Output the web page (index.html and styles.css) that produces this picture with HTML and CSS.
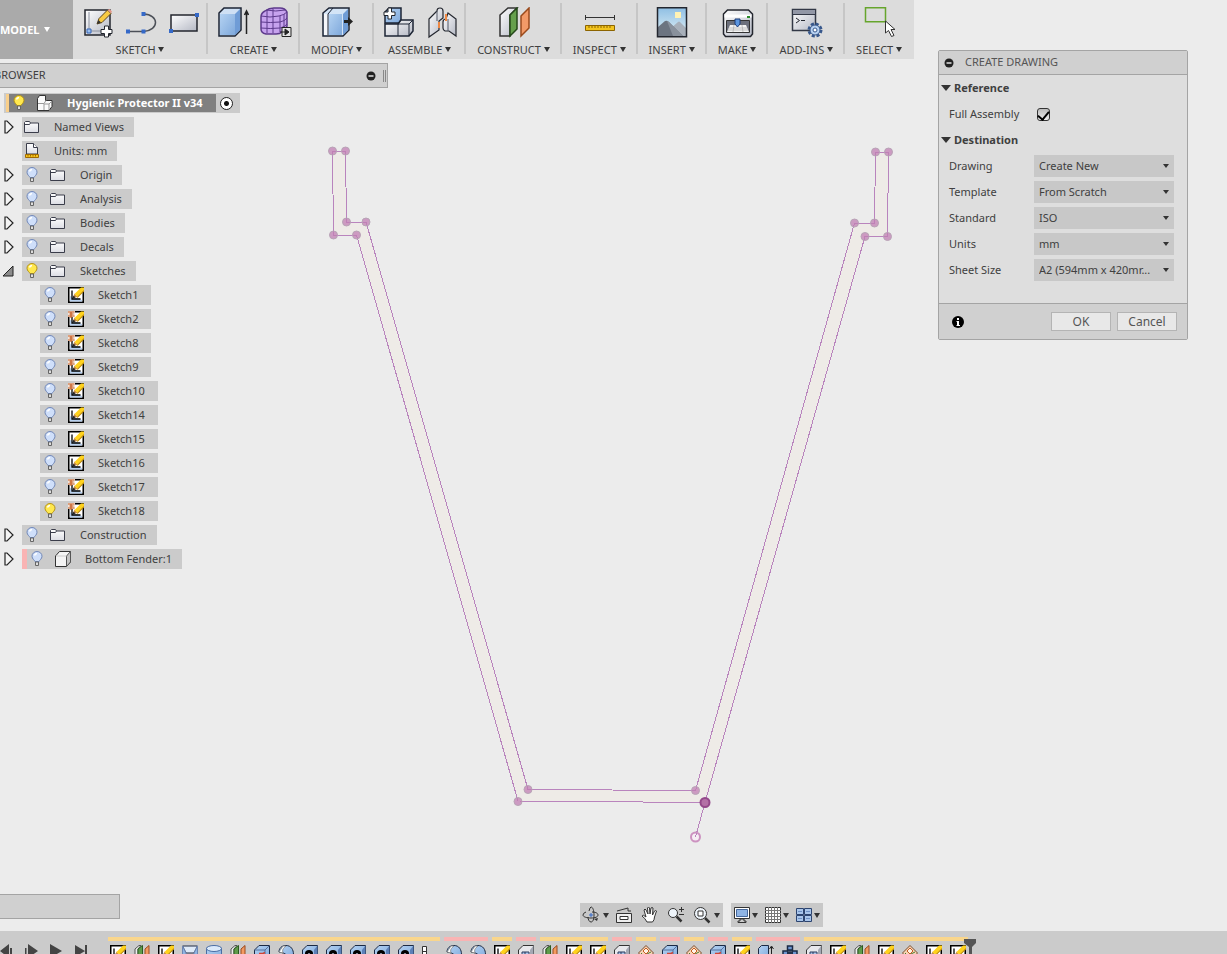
FILE: index.html
```html
<!DOCTYPE html>
<html lang="en">
<head>
    <meta charset="UTF-8">
    <meta name="viewport" content="width=device-width, initial-scale=1.0">
    <title>Hygienic Protector II v34</title>
    <link rel="stylesheet" href="styles.css">
</head>
<body>
    <!-- Shared icons -->
    <svg class="sprite" aria-hidden="true">
        <defs>
            <linearGradient id="blue" x1="0" y1="0" x2="1" y2="1">
                <stop offset="0" stop-color="#b4d2f2"/><stop offset="1" stop-color="#7fa9dc"/>
            </linearGradient>
            <linearGradient id="grey" x1="0" y1="0" x2="1" y2="1">
                <stop offset="0" stop-color="#ffffff"/><stop offset="1" stop-color="#b4b8c4"/>
            </linearGradient>
            <linearGradient id="paper" x1="0" y1="0" x2="0" y2="1">
                <stop offset="0" stop-color="#ffffff"/><stop offset="1" stop-color="#dcdde4"/>
            </linearGradient>
            <linearGradient id="sky" x1="0" y1="0" x2="0" y2="1">
                <stop offset="0" stop-color="#8fbfe4"/><stop offset="1" stop-color="#e4f2f6"/>
            </linearGradient>
        </defs>
        <symbol id="bulb-off" viewBox="0 0 16 16">
            <path d="M6 10.500C5.500 9 3 8 3 5.200a5 4.700 0 0 1 10 0C13 8 10.500 9 10 10.500z" fill="#cfdffa" stroke="#7188b8"/>
            <path d="M5.500 4.500q.5-1.700 2.500-2" fill="none" stroke="#fff" stroke-width="1.500"/>
            <path d="M6.500 11h3v3.500h-3z" fill="#ddd" stroke="#666"/>
        </symbol>
        <symbol id="bulb-on" viewBox="0 0 16 16">
            <path d="M6 10.500C5.500 9 3 8 3 5.200a5 4.700 0 0 1 10 0C13 8 10.500 9 10 10.500z" fill="#ffe84e" stroke="#b49216"/>
            <path d="M5.500 4.500q.5-1.700 2.500-2" fill="none" stroke="#fff" stroke-width="1.500"/>
            <path d="M6.500 11h3v3.500h-3z" fill="#ddd" stroke="#666"/>
        </symbol>
        <symbol id="folder" viewBox="0 0 16 16">
            <path d="M.5 13.500v-10l1-1h4l1 1.500h8v9.500z" fill="url(#paper)" stroke="#3a3d4a"/>
            <path d="M.5 5.500h5l1-1.500" fill="none" stroke="#3a3d4a"/>
        </symbol>
        <symbol id="units" viewBox="0 0 16 16">
            <path d="M2.500 11V.5h7l4 4V11z" fill="url(#paper)" stroke="#3a3d4a"/>
            <path d="M9.500.5v4h4" fill="#fff" stroke="#3a3d4a"/>
            <path d="M1.500 11.500h13v3h-13z" fill="#f6c51c" stroke="#a06a00"/>
            <path d="M4 12v1.500M6.500 12v1.500M9 12v1.500M11.500 12v1.500" stroke="#a06a00"/>
        </symbol>
        <symbol id="cube" viewBox="0 0 16 16">
            <path d="M.5 5l4-4.500h11V11l-4 4.500H.5z" fill="#f4f4f4" stroke="#333"/>
            <path d="M11.500 5l4-4.500V11l-4 4.500z" fill="#c4c4c4" stroke="#555"/>
            <path d="M1 5h10.500" fill="none" stroke="#ccc"/>
        </symbol>
        <symbol id="assembly" viewBox="0 0 16 16">
            <path d="M.5 3.500l2-3h6v5h6.500v6l-3 4H.5z" fill="#fafafa" stroke="#333"/>
            <path d="M1 8.500h6M7 8.500l2-3M7 9v6M7 9h5v6M12 9l3-3" fill="none" stroke="#999"/>
        </symbol>
        <symbol id="sketch" viewBox="0 0 16 16">
            <path d="M.75.75h14.500v14.500H.75z" fill="#fff" stroke="#000" stroke-width="1.500"/>
            <path d="M2 9l12 4v1.500H2z" fill="#b7d0ef"/>
            <path d="M4 3.500v8.500h8.500" fill="none" stroke="#000" stroke-width="1.300"/>
            <path d="M5 11l1.500-4.500L9.500 10z" fill="#c88c48"/>
            <path d="M6.500 7L13 .5h3v3L9.500 10z" fill="#ffd21c"/>
            <path d="M9 10l7-7v1.500L9.500 11z" fill="#b8860b"/>
            <path d="M4.500 11.500l1-3 2 2z" fill="#222"/>
        </symbol>
        <symbol id="sketch-pin" viewBox="0 0 16 16">
            <use href="#sketch"/>
            <path d="M0 0h7v6H0z" fill="#f4e3d6"/>
            <path d="M0 1h6.500M1.500 3h4M0 5h6.500M3 1v6" stroke="#c65c22" stroke-width="1.200"/>
        </symbol>
        <symbol id="plane" viewBox="0 0 16 16">
            <path d="M1 4l4-3.500h2L4 4v12H1z" fill="#eee" stroke="#555"/>
            <path d="M4 4L8.500.5V13L4 16z" fill="#5f9c4b" stroke="#2c5a20"/>
            <path d="M11 4l4-3.500V12l-4 4z" fill="#f39a62" stroke="#9a4a1c"/>
        </symbol>
        <symbol id="loft" viewBox="0 0 16 16">
            <path d="M.5 1h15L12 8H4z" fill="#dfeaf8" stroke="#222c44"/>
            <path d="M.5 1L4 8v8H.5zM15.500 1L12 8v8h3.500z" fill="#8fb4e2" stroke="#6d86b4"/>
        </symbol>
        <symbol id="cylinder" viewBox="0 0 16 16">
            <path d="M.5 3v12h15V3z" fill="url(#blue)" stroke="#4a6da4"/>
            <ellipse cx="8" cy="3.500" rx="7.500" ry="3" fill="#dceafa" stroke="#4a6da4"/>
        </symbol>
        <symbol id="block" viewBox="0 0 16 16">
            <path d="M.5 5L5 .5h10.500V12L11 16H.5z" fill="url(#blue)" stroke="#1c2a44"/>
            <path d="M.5 5H11v11M11 5l4.500-4.500" fill="none" stroke="#55719c"/>
            <path d="M5 8.500h4l2-1" fill="none" stroke="#d04434" stroke-width="1.500"/>
        </symbol>
        <symbol id="fillet" viewBox="0 0 16 16">
            <path d="M1 7C1 3 4 .5 8 .5c5 0 7.500 4 7.500 9V16H10c1-5-2-8-9-9z" fill="url(#blue)" stroke="#1c2a44"/>
            <path d="M1 7l4-6h3C5 3 4 5 5 8z" fill="#fff" stroke="#777" stroke-width=".7"/>
        </symbol>
        <symbol id="hole" viewBox="0 0 16 16">
            <path d="M.5 5L5 .5h10.500V12L11 16H.5z" fill="url(#blue)" stroke="#1c2a44"/>
            <path d="M12 5l3.500-4.500V12L12 16z" fill="#5c80b8"/>
            <ellipse cx="7" cy="8.500" rx="4" ry="3.500" fill="#000"/>
            <circle cx="7" cy="9.500" r="1.300" fill="#cfdffa"/>
        </symbol>
        <symbol id="pattern" viewBox="0 0 16 16">
            <path d="M4.500 1.500h4v15h-4zM4 6.500h5" fill="#fff" stroke="#333"/>
        </symbol>
        <symbol id="shell" viewBox="0 0 16 16">
            <path d="M.5 5L5 .5h10.500V12L11 16H.5z" fill="#e8e8ec" stroke="#333"/>
            <path d="M12 5l3.500-4.500V12L12 16z" fill="#a4a8b4"/>
            <path d="M4 7h7v7H4zM7 7v7" fill="#a9c5ea" stroke="#2a3a5c"/>
        </symbol>
        <symbol id="mirror" viewBox="0 0 16 16">
            <path d="M.5 8L8 .5 15.500 8 8 15.500z" fill="#f7d4b4" stroke="#7a4a28"/>
            <path d="M5 6l3-3 3 3-3 3z" fill="#fff3e6" stroke="#c65c22"/>
            <path d="M3 8l5 5M9 9l4-2" stroke="#4a7a34"/>
        </symbol>
        <symbol id="pull" viewBox="0 0 16 16">
            <path d="M.5 3.500l3-3h7V14l-3 2h-7z" fill="url(#blue)" stroke="#1c2a44"/>
            <path d="M13.500 2v14M11.500 4l2-3 2 3" fill="none" stroke="#222"/>
        </symbol>
        <symbol id="joint" viewBox="0 0 16 16">
            <path d="M5.500 1h5v4h-5zM1 6h5v7H1zM10 6h5v7h-5z" fill="#6f96d0" stroke="#1c2a44" stroke-width="1.500"/>
            <path d="M8 5v4M5 8h6" stroke="#1c2a44" stroke-width="1.500"/>
        </symbol>
        <symbol id="minus" viewBox="0 0 10 10">
            <circle cx="5" cy="5" r="4.500" fill="#222"/>
            <path d="M2.500 5h5" stroke="#e4e4e4" stroke-width="1.500"/>
        </symbol>
        <symbol id="closed" viewBox="0 0 10 14">
            <path d="M1 1v12h2l6-6-6-6z" fill="#f4f4f4" stroke="#222" stroke-width="1.200"/>
        </symbol>
        <symbol id="open" viewBox="0 0 12 12">
            <path d="M11 1v10H1z" fill="#8c8c8c" stroke="#222"/>
        </symbol>
    </svg>

    <main class="workspace">
        <!-- Sketch profile on the canvas -->
        <svg class="canvas" role="img" aria-label="Sketch profile">
            <path class="profile" d="M332.500 151L333.500 235H356.500L518 801L705 802.500L865 236.500H887.500L888.500 152H875.500L874.500 223H854.500L695.500 790.500L528 789.500L366 222H346.500L345.500 151z"/>
            <path class="profile" d="M705 802.500L695.500 837"/>
            <g class="points">
                <circle cx="332.500" cy="151" r="4"/><circle cx="345.500" cy="151" r="4"/>
                <circle cx="346.500" cy="222" r="4"/><circle cx="366" cy="222" r="4"/>
                <circle cx="333.500" cy="235" r="4"/><circle cx="356.500" cy="235" r="4"/>
                <circle cx="875.500" cy="152" r="4"/><circle cx="888.500" cy="152" r="4"/>
                <circle cx="854.500" cy="223" r="4"/><circle cx="874.500" cy="223" r="4"/>
                <circle cx="865" cy="236.500" r="4"/><circle cx="887.500" cy="236.500" r="4"/>
                <circle cx="528" cy="789.500" r="4"/><circle cx="518" cy="801.500" r="4"/>
                <circle cx="695.500" cy="790.500" r="4"/>
            </g>
            <circle cx="705" cy="802.500" r="4.500" fill="#b470a6" stroke="#94488a" stroke-width="2"/>
            <circle cx="695.500" cy="837" r="4.500" fill="#f6eef4" stroke="#cc92c0" stroke-width="2"/>
            <path class="profile" d="M695.500 837l1-4"/>
        </svg>

        <header class="toolbar">
            <button class="mode">MODEL <i class="caret"></i></button>
            <div class="group">
                <div class="tools">
                    <button class="tool" aria-label="Create Sketch">
                        <svg viewBox="0 0 32 32">
                            <path d="M3 3h25v25H3z" fill="url(#grey)" stroke="#23262e" stroke-width="1.500"/>
                            <path d="M7 5v19h19" fill="none" stroke="#8c92a0"/>
                            <path d="M5 22h4v4H5z" fill="#9cc0ee" stroke="#3465b8"/>
                            <path d="M15 17l2-5.500L25.500 3l3.500 3.500-9 9z" fill="#f8ca42" stroke="#5a4420"/>
                            <path d="M15 17l1.500-4 2.500 2.500z" fill="#333"/>
                            <path d="M25.500 3l3.500 3.500 1-2-2.500-2.500z" fill="#e49a8c"/>
                            <path d="M22.500 19h4v3.500H30v4h-3.500V30h-4v-3.500H19v-4h3.500z" fill="#fff" stroke="#23262e"/>
                        </svg>
                    </button>
                    <button class="tool" aria-label="Line">
                        <svg viewBox="0 0 32 32">
                            <path d="M3 24.500h15.500c16-1 16-17 0-17.500" fill="none" stroke="#4c5058" stroke-width="1.500"/>
                            <path d="M1 22.500h4v4H1zM16.500 22.500h4v4h-4zM16.500 5h4v4h-4z" fill="#3569c8"/>
                        </svg>
                    </button>
                    <button class="tool" aria-label="Rectangle">
                        <svg viewBox="0 0 32 32">
                            <path d="M3 8h26v16H3z" fill="url(#grey)" stroke="#23262e" stroke-width="1.500"/>
                            <path d="M1 22h4v4H1zM27 6h4v4h-4z" fill="#3569c8"/>
                        </svg>
                    </button>
                </div>
                <button class="menu">SKETCH <i class="caret"></i></button>
            </div>
            <div class="group">
                <div class="tools">
                    <button class="tool" aria-label="Extrude">
                        <svg viewBox="0 0 32 32">
                            <path d="M2 6l5-5h17v22l-6 6H2z" fill="#cfe0f4" stroke="#1c2434" stroke-width="1.500"/>
                            <path d="M3 7h15v21H3z" fill="url(#blue)"/>
                            <path d="M18 7l5-5v21l-5 5z" fill="#6f9cd6"/>
                            <path d="M29.500 5v22M27.500 8l2-4 2 4" fill="none" stroke="#222" stroke-width="1.500"/>
                        </svg>
                    </button>
                    <button class="tool" aria-label="Create Form">
                        <svg viewBox="0 0 32 32">
                            <path d="M1 10q0-4 4-6 4-3 9-3h6q5 0 7 4v14q-1 4-5 6-2 2-6 2H6q-5-1-5-5z" fill="#c6a2ee" stroke="#5d3a8c" stroke-width="1.500"/>
                            <path d="M1 9q9 2 18 0 5-1 8-4M1 15q9 1 19 0 5-1 7-4M1 21q9 1 19 0 5-1 7-4M7 3v23M13 2v24M20 9v16M6 3q10 2 19 0M24 7v15" fill="none" stroke="#5d3a8c"/>
                            <path d="M22 20.500h9v9h-9z" fill="#e4e4e4" stroke="#222"/>
                            <path d="M20 25h5v-3l4 3-4 3v-3" fill="#222" stroke="#222"/>
                        </svg>
                    </button>
                </div>
                <button class="menu">CREATE <i class="caret"></i></button>
            </div>
            <div class="group">
                <div class="tools">
                    <button class="tool" aria-label="Press Pull">
                        <svg viewBox="0 0 32 32">
                            <path d="M2 6l6-5h20v22l-6 6H2z" fill="#d4e4f6" stroke="#1c2434" stroke-width="1.500"/>
                            <path d="M3 7h4v21H3z" fill="#f4f6fa"/>
                            <path d="M8 7h13v21H8z" fill="url(#blue)"/>
                            <path d="M22 7l5-5v21l-5 5z" fill="#6f9cd6"/>
                            <path d="M7 28V7l5-6" fill="none" stroke="#1c2434"/>
                            <path d="M23 13h4v-3l5 4.500-5 4.500v-3h-4z" fill="#222"/>
                        </svg>
                    </button>
                </div>
                <button class="menu">MODIFY <i class="caret"></i></button>
            </div>
            <div class="group">
                <div class="tools">
                    <button class="tool" aria-label="New Component">
                        <svg viewBox="0 0 32 32">
                            <path d="M2 5l4-4h12v12l-2 3H2z" fill="url(#blue)" stroke="#1c2434" stroke-width="1.500"/>
                            <path d="M2 17h13l3-4h12v11l-4 5H2z" fill="url(#grey)" stroke="#1c2434" stroke-width="1.500"/>
                            <path d="M15 29V17h11v12M26 17l4-4" fill="none" stroke="#1c2434"/>
                            <path d="M5 1h3.500v4H12v3.500H8.500V12H5V8.500H1V5h4z" fill="#fff" stroke="#23262e"/>
                        </svg>
                    </button>
                    <button class="tool" aria-label="Joint">
                        <svg viewBox="0 0 32 32">
                            <path d="M3 12l8-8q0-3 3-3t3 3v7l-4 3v9l-10 7z" fill="url(#grey)" stroke="#23262e" stroke-width="1.200"/>
                            <path d="M30 29l-7-5h-4q-2-1-2-3v-6q0-3 3-3l2-6 8 6z" fill="url(#grey)" stroke="#23262e" stroke-width="1.200"/>
                            <path d="M11 4v10M22 12v12" fill="none" stroke="#555b68"/>
                            <path d="M13 15v6M20 7v7" stroke="#ee8844" stroke-width="2"/>
                        </svg>
                    </button>
                </div>
                <button class="menu">ASSEMBLE <i class="caret"></i></button>
            </div>
            <div class="group">
                <div class="tools">
                    <button class="tool" aria-label="Offset Plane">
                        <svg viewBox="0 0 32 32">
                            <path d="M2 8l8-7h9l-7 7v21H2z" fill="url(#grey)" stroke="#333" stroke-width="1.500"/>
                            <path d="M12 8l7-7v21l-7 7z" fill="#65a04c" stroke="#25481a" stroke-width="1.500"/>
                            <path d="M23 9l8-8v20l-8 8z" fill="#f29a68" stroke="#9a4a1c" stroke-width="1.500"/>
                        </svg>
                    </button>
                </div>
                <button class="menu">CONSTRUCT <i class="caret"></i></button>
            </div>
            <div class="group">
                <div class="tools">
                    <button class="tool" aria-label="Measure">
                        <svg viewBox="0 0 32 32">
                            <path d="M1.500 10.500h29M1.500 8v5M30.500 8v5" fill="none" stroke="#333"/>
                            <path d="M1.500 18.500h29v5h-29z" fill="#f2c41e" stroke="#8c6400"/>
                            <path d="M5 19v2M8 19v2M11 19v2M14 19v2M17 19v2M20 19v2M23 19v2M26 19v2" stroke="#8c6400"/>
                        </svg>
                    </button>
                </div>
                <button class="menu">INSPECT <i class="caret"></i></button>
            </div>
            <div class="group">
                <div class="tools">
                    <button class="tool" aria-label="Insert Image">
                        <svg viewBox="0 0 32 32">
                            <path d="M1.500 .75h29v29h-29z" fill="url(#sky)"/>
                            <path d="M19 5h6v6h-6z" fill="#fff2b4"/>
                            <path d="M14 22l8-7q1-1 2 0l6 6v8H14z" fill="#a8b0ba"/>
                            <path d="M2 20l7-6q2-1 4 1l14 14H2z" fill="#6c7480"/>
                            <path d="M11 14l6 15h10L13 15z" fill="#89919c"/>
                            <path d="M1.500 .75h29v29h-29z" fill="none" stroke="#23262e" stroke-width="1.500"/>
                        </svg>
                    </button>
                </div>
                <button class="menu">INSERT <i class="caret"></i></button>
            </div>
            <div class="group">
                <div class="tools">
                    <button class="tool" aria-label="3D Print">
                        <svg viewBox="0 0 32 32">
                            <path d="M1.500 7l4-4h21l4 4v20l-2 2.500h-25l-2-2.500z" fill="url(#grey)" stroke="#23262e" stroke-width="1.500"/>
                            <path d="M2.500 7.500h27v3h-27z" fill="#fff"/>
                            <path d="M25 9h3v2h-3z" fill="#2a8a2a"/>
                            <path d="M4.500 13.500h23v12h-23z" fill="#6c707c" stroke="#333"/>
                            <path d="M8 18h16l3 7H5z" fill="#f4f4f4"/>
                            <path d="M7 21h18M6 23h20M12 18l-1 7M20 18l1 7" stroke="#aaa" stroke-width=".7"/>
                            <path d="M13 12h5v5l-2.500 3-2.500-3z" fill="#5c96e0" stroke="#1c3c78"/>
                        </svg>
                    </button>
                </div>
                <button class="menu">MAKE <i class="caret"></i></button>
            </div>
            <div class="group">
                <div class="tools">
                    <button class="tool" aria-label="Scripts and Add-Ins">
                        <svg viewBox="0 0 32 32">
                            <path d="M1.500 2.500h23v21h-23z" fill="url(#grey)" stroke="#333846" stroke-width="1.500"/>
                            <path d="M2 3h22v4H2z" fill="#9297a6"/>
                            <path d="M1.500 7.500h23" stroke="#333846"/>
                            <path d="M5 11l3.500 2.500L5 16M10 13.500h4" fill="none" stroke="#23262e"/>
                            <circle cx="24" cy="23" r="6" fill="none" stroke="#38588c" stroke-width="3" stroke-dasharray="3 1.700"/>
                            <circle cx="24" cy="23" r="5" fill="#b8d2f2" stroke="#38588c"/>
                            <circle cx="24" cy="23" r="2" fill="#fff" stroke="#38588c"/>
                        </svg>
                    </button>
                </div>
                <button class="menu">ADD-INS <i class="caret"></i></button>
            </div>
            <div class="group">
                <div class="tools">
                    <button class="tool" aria-label="Select">
                        <svg viewBox="0 0 32 32">
                            <path d="M1.500 .75h20v14h-20z" fill="none" stroke="#66a52c" stroke-width="1.500"/>
                            <path d="M21.500 14v12l3-2.500 3 6 2.500-1-3-6h4z" fill="#fff" stroke="#333"/>
                        </svg>
                    </button>
                </div>
                <button class="menu">SELECT <i class="caret"></i></button>
            </div>
        </header>

        <section class="browser">
            <header class="browser-head">
                <h2 class="browser-title">BROWSER</h2>
                <button class="collapse" aria-label="Collapse browser"><svg><use href="#minus"/></svg></button>
                <span class="grip"></span>
            </header>
            <div class="root">
                <div class="root-name">
                    <svg class="icon"><use href="#bulb-on"/></svg>
                    <svg class="icon"><use href="#assembly"/></svg>
                    <span class="name">Hygienic Protector II v34</span>
                </div>
                <input class="active" type="radio" aria-label="Activate component" checked>
            </div>
            <ul class="tree">
                <li class="row"><button class="toggle" aria-label="Expand"><svg><use href="#closed"/></svg></button>
                    <div class="node"><svg class="icon"><use href="#folder"/></svg><span class="name">Named Views</span></div></li>
                <li class="row"><span class="toggle"></span>
                    <div class="node"><svg class="icon"><use href="#units"/></svg><span class="name">Units: mm</span></div></li>
                <li class="row"><button class="toggle" aria-label="Expand"><svg><use href="#closed"/></svg></button>
                    <div class="node"><svg class="icon"><use href="#bulb-off"/></svg><svg class="icon"><use href="#folder"/></svg><span class="name">Origin</span></div></li>
                <li class="row"><button class="toggle" aria-label="Expand"><svg><use href="#closed"/></svg></button>
                    <div class="node"><svg class="icon"><use href="#bulb-off"/></svg><svg class="icon"><use href="#folder"/></svg><span class="name">Analysis</span></div></li>
                <li class="row"><button class="toggle" aria-label="Expand"><svg><use href="#closed"/></svg></button>
                    <div class="node"><svg class="icon"><use href="#bulb-off"/></svg><svg class="icon"><use href="#folder"/></svg><span class="name">Bodies</span></div></li>
                <li class="row"><button class="toggle" aria-label="Expand"><svg><use href="#closed"/></svg></button>
                    <div class="node"><svg class="icon"><use href="#bulb-off"/></svg><svg class="icon"><use href="#folder"/></svg><span class="name">Decals</span></div></li>
                <li class="row"><button class="toggle expanded" aria-label="Collapse"><svg><use href="#open"/></svg></button>
                    <div class="node"><svg class="icon"><use href="#bulb-on"/></svg><svg class="icon"><use href="#folder"/></svg><span class="name">Sketches</span></div></li>
                <li>
                    <ul class="tree sketches">
                        <li class="row"><div class="node"><svg class="icon"><use href="#bulb-off"/></svg><svg class="icon"><use href="#sketch"/></svg><span class="name">Sketch1</span></div></li>
                        <li class="row"><div class="node"><svg class="icon"><use href="#bulb-off"/></svg><svg class="icon"><use href="#sketch-pin"/></svg><span class="name">Sketch2</span></div></li>
                        <li class="row"><div class="node"><svg class="icon"><use href="#bulb-off"/></svg><svg class="icon"><use href="#sketch-pin"/></svg><span class="name">Sketch8</span></div></li>
                        <li class="row"><div class="node"><svg class="icon"><use href="#bulb-off"/></svg><svg class="icon"><use href="#sketch-pin"/></svg><span class="name">Sketch9</span></div></li>
                        <li class="row"><div class="node"><svg class="icon"><use href="#bulb-off"/></svg><svg class="icon"><use href="#sketch-pin"/></svg><span class="name">Sketch10</span></div></li>
                        <li class="row"><div class="node"><svg class="icon"><use href="#bulb-off"/></svg><svg class="icon"><use href="#sketch"/></svg><span class="name">Sketch14</span></div></li>
                        <li class="row"><div class="node"><svg class="icon"><use href="#bulb-off"/></svg><svg class="icon"><use href="#sketch"/></svg><span class="name">Sketch15</span></div></li>
                        <li class="row"><div class="node"><svg class="icon"><use href="#bulb-off"/></svg><svg class="icon"><use href="#sketch"/></svg><span class="name">Sketch16</span></div></li>
                        <li class="row"><div class="node"><svg class="icon"><use href="#bulb-off"/></svg><svg class="icon"><use href="#sketch-pin"/></svg><span class="name">Sketch17</span></div></li>
                        <li class="row"><div class="node"><svg class="icon"><use href="#bulb-on"/></svg><svg class="icon"><use href="#sketch-pin"/></svg><span class="name">Sketch18</span></div></li>
                    </ul>
                </li>
                <li class="row"><button class="toggle" aria-label="Expand"><svg><use href="#closed"/></svg></button>
                    <div class="node"><svg class="icon"><use href="#bulb-off"/></svg><svg class="icon"><use href="#folder"/></svg><span class="name">Construction</span></div></li>
                <li class="row"><button class="toggle" aria-label="Expand"><svg><use href="#closed"/></svg></button>
                    <div class="node component"><svg class="icon"><use href="#bulb-off"/></svg><svg class="icon"><use href="#cube"/></svg><span class="name">Bottom Fender:1</span></div></li>
            </ul>
        </section>

        <form class="dialog">
            <header class="dialog-head">
                <svg class="dialog-icon"><use href="#minus"/></svg>
                <h2 class="dialog-title">CREATE DRAWING</h2>
            </header>
            <div class="dialog-body">
                <h3 class="section"><i class="caret"></i>Reference</h3>
                <div class="field">
                    <label for="full">Full Assembly</label>
                    <input class="check" type="checkbox" id="full" checked>
                </div>
                <h3 class="section"><i class="caret"></i>Destination</h3>
                <div class="field">
                    <label for="drawing">Drawing</label>
                    <div class="select"><select id="drawing"><option>Create New</option></select></div>
                </div>
                <div class="field">
                    <label for="template">Template</label>
                    <div class="select"><select id="template"><option>From Scratch</option></select></div>
                </div>
                <div class="field">
                    <label for="standard">Standard</label>
                    <div class="select"><select id="standard"><option>ISO</option></select></div>
                </div>
                <div class="field">
                    <label for="units-field">Units</label>
                    <div class="select"><select id="units-field"><option>mm</option></select></div>
                </div>
                <div class="field">
                    <label for="sheet">Sheet Size</label>
                    <div class="select"><select id="sheet"><option>A2 (594mm x 420mr...</option></select></div>
                </div>
            </div>
            <footer class="dialog-foot">
                <svg class="info" viewBox="0 0 12 12">
                    <circle cx="6" cy="6" r="6" fill="#000"/>
                    <path d="M5 2h2v2H5zM4.500 5H7v4h1v1H4.500V9H5V6h-.5z" fill="#fff"/>
                </svg>
                <button class="action" type="button">OK</button>
                <button class="action" type="button">Cancel</button>
            </footer>
        </form>

        <div class="dock">
            <div class="comments"></div>
            <nav class="views">
                <div class="bar">
                    <button class="view" aria-label="Orbit">
                        <svg viewBox="0 0 18 18">
                            <path d="M4 6q-3 1-3 3c0 2 4 3 8 3s7-1 7-3-3-3-6-3M7 5q1-4 2-4c2 0 3 4 3 8s-1 7-3 7-3-3-3-5" fill="none" stroke="#333"/>
                            <path d="M9 7v4M7 9h4" stroke="#3569c8"/><path d="M12 13l4-1-1 3z" fill="#333"/>
                        </svg><i class="caret"></i>
                    </button>
                    <button class="view" aria-label="Look At">
                        <svg viewBox="0 0 18 18">
                            <path d="M1.500 7.500h15v9h-15z" fill="#eee" stroke="#333"/><path d="M5 10.500h8v3H5z" fill="#fff" stroke="#333"/>
                            <path d="M2 5l11-3v3h3" fill="none" stroke="#333"/>
                        </svg>
                    </button>
                    <button class="view" aria-label="Pan">
                        <svg viewBox="0 0 18 18">
                            <path d="M6 16q-2-4-5-6 1-2 4 1L3 4q1-2 2 0l2 4-.5-6q1-2 2 0l.5 6 1-6q1-1 2 0l-.5 7 2-4q1-1 2 0l-2 6q0 3-2 5z" fill="#fff" stroke="#333"/>
                        </svg>
                    </button>
                    <button class="view" aria-label="Zoom">
                        <svg viewBox="0 0 18 18">
                            <circle cx="6" cy="7" r="4.500" fill="#eef4fa" stroke="#333"/><path d="M9.500 10.500l5 5" stroke="#333" stroke-width="2.500"/>
                            <path d="M12 3.500h5M14.500 1v5M12 8.500h5" stroke="#333"/>
                        </svg>
                    </button>
                    <button class="view" aria-label="Fit">
                        <svg viewBox="0 0 18 18">
                            <circle cx="7.500" cy="7.500" r="6" fill="#eef4fa" stroke="#333"/><path d="M12 12l4.500 4.500" stroke="#333" stroke-width="2.500"/>
                            <path d="M5 5h5v5H5z" fill="#fff" stroke="#333"/>
                        </svg><i class="caret"></i>
                    </button>
                </div>
                <div class="bar">
                    <button class="view" aria-label="Display Settings">
                        <svg viewBox="0 0 18 18">
                            <path d="M1.500 1.500h15v11h-15z" fill="#fff" stroke="#333"/><path d="M3.500 3.500h11v7h-11z" fill="#8fb4e4" stroke="#46689c"/>
                            <path d="M7 13h4v2h2v1.500H5V15h2z" fill="#ccc" stroke="#333"/>
                        </svg><i class="caret"></i>
                    </button>
                    <button class="view" aria-label="Grid and Snaps">
                        <svg viewBox="0 0 18 18">
                            <path d="M1.500 1.500h15v15h-15z" fill="#fff" stroke="#333"/>
                            <path d="M4.500 1v16M7.500 1v16M10.500 1v16M13.500 1v16M1 4.500h16M1 7.500h16M1 10.500h16M1 13.500h16" stroke="#777"/>
                        </svg><i class="caret"></i>
                    </button>
                    <button class="view" aria-label="Viewports">
                        <svg viewBox="0 0 18 18">
                            <path d="M1.500 2.500h7v6h-7zM9.500 2.500h7v6h-7zM1.500 9.500h7v6h-7zM9.500 9.500h7v6h-7z" fill="#a9c5ea" stroke="#2c4470"/>
                            <path d="M3 5.500h4M11 5.500h4M3 12.500h4M11 12.500h4" stroke="#6d8fc4"/>
                        </svg><i class="caret"></i>
                    </button>
                </div>
            </nav>
        </div>
    </main>

    <footer class="timeline">
        <div class="player">
            <button class="play" aria-label="Step back"><svg viewBox="0 0 14 14"><path d="M9 0v14L0 7zM10 4h2v10h-2z"/></svg></button>
            <button class="play" aria-label="Step forward"><svg viewBox="0 0 14 14"><path d="M0 4h1.500v10H0zM3 0v14l10-7z"/></svg></button>
            <button class="play" aria-label="Play"><svg viewBox="0 0 14 14"><path d="M0 0v14l12-7z"/></svg></button>
            <button class="play" aria-label="Go to end"><svg viewBox="0 0 14 14"><path d="M0 1v12l10-6zM10 1h2v12h-2z"/></svg></button>
        </div>
        <div class="history">
            <div class="span">
                <svg class="icon"><use href="#sketch"/></svg><svg class="icon"><use href="#plane"/></svg><svg class="icon"><use href="#sketch"/></svg>
                <svg class="icon"><use href="#loft"/></svg><svg class="icon"><use href="#cylinder"/></svg><svg class="icon"><use href="#plane"/></svg>
                <svg class="icon"><use href="#block"/></svg><svg class="icon"><use href="#fillet"/></svg><svg class="icon"><use href="#hole"/></svg>
                <svg class="icon"><use href="#hole"/></svg><svg class="icon"><use href="#hole"/></svg><svg class="icon"><use href="#hole"/></svg>
                <svg class="icon"><use href="#hole"/></svg><svg class="icon narrow"><use href="#pattern"/></svg>
            </div>
            <div class="span pink"><svg class="icon"><use href="#fillet"/></svg><svg class="icon"><use href="#fillet"/></svg></div>
            <div class="span"><svg class="icon"><use href="#sketch"/></svg></div>
            <div class="span pink"><svg class="icon"><use href="#shell"/></svg></div>
            <div class="span"><svg class="icon"><use href="#plane"/></svg><svg class="icon"><use href="#sketch"/></svg><svg class="icon"><use href="#sketch"/></svg></div>
            <div class="span pink"><svg class="icon"><use href="#shell"/></svg></div>
            <div class="span"><svg class="icon"><use href="#mirror"/></svg></div>
            <div class="span pink"><svg class="icon"><use href="#block"/></svg></div>
            <div class="span"><svg class="icon"><use href="#mirror"/></svg></div>
            <div class="span pink"><svg class="icon"><use href="#block"/></svg></div>
            <div class="span"><svg class="icon"><use href="#sketch"/></svg></div>
            <div class="span pink"><svg class="icon"><use href="#pull"/></svg><svg class="icon"><use href="#joint"/></svg></div>
            <div class="span">
                <svg class="icon"><use href="#shell"/></svg><svg class="icon"><use href="#sketch"/></svg><svg class="icon"><use href="#plane"/></svg>
                <svg class="icon"><use href="#sketch"/></svg><svg class="icon"><use href="#mirror"/></svg><svg class="icon"><use href="#sketch"/></svg>
                <svg class="icon"><use href="#sketch"/></svg>
                <svg class="marker" viewBox="0 0 12 16"><path d="M0 0h12v4L8 8v8H5V8L0 4z" fill="#555"/></svg>
            </div>
        </div>
    </footer>
</body>
</html>
```

FILE: styles.css
```css
* {
    box-sizing: border-box;
}

body {
    margin: 0;
    height: 100vh;
    display: flex;
    flex-direction: column;
    overflow: hidden;
    background-color: #ececec;
    color: #404040;
    font-family: "Noto Sans", "Open Sans", sans-serif;
    font-size: 11px;
    line-height: 16px;
}

h2,
h3,
ul {
    margin: 0;
    padding: 0;
    font-size: 11px;
}

button {
    padding: 0;
    border: none;
    background: none;
    color: inherit;
    font: inherit;
}

svg {
    display: block;
    flex: none;
}

.sprite {
    position: absolute;
    width: 0;
    height: 0;
}

.icon {
    width: 16px;
    height: 16px;
}

.caret {
    display: inline-block;
    flex: none;
    border: 3px solid transparent;
    border-top: 5px solid #333;
    border-bottom: none;
}

.workspace {
    position: relative;
    flex: 1;
    min-height: 0;
    display: flex;
    flex-direction: column;
    align-items: flex-start;
}

/* Canvas */
.canvas {
    position: absolute;
    top: 0;
    left: 0;
    width: 100%;
    height: 100%;
}

.profile {
    fill: #eeebe7;
    stroke: #b984bd;
    stroke-width: 1;
    shape-rendering: crispEdges;
}

.points circle {
    fill: #c27fb4;
    fill-opacity: 0.75;
    stroke: #b8a4b6;
    stroke-width: 1;
}

/* Toolbar */
.toolbar {
    position: relative;
    display: flex;
    height: 59px;
    background-color: #dcdcdc;
}

.mode {
    width: 73px;
    background-color: #aaa;
    color: #fff;
    font-weight: bold;
    text-align: left;
}

.mode .caret {
    border-top-color: #fff;
    margin: 0 0 2px 2px;
}

.group {
    display: flex;
    flex-direction: column;
    align-items: center;
    padding: 7px 3px 0;
    background: linear-gradient(#c6c6c6, #c6c6c6) right 3px / 2px 51px no-repeat;
}

.group:last-child {
    background: none;
}

.tools {
    display: flex;
}

.tool {
    display: flex;
    justify-content: center;
    width: 43px;
}

.tool svg {
    width: 32px;
    height: 32px;
}

.menu {
    padding: 3px 9px 0 8px;
    white-space: nowrap;
}

.menu .caret {
    margin-bottom: 2px;
}

/* Browser */
.browser {
    position: relative;
    margin-top: 4px;
}

.browser-head {
    display: flex;
    align-items: center;
    gap: 7px;
    width: 388px;
    height: 25px;
    padding-right: 1px;
    background-color: #d0d0d0;
    border: 1px solid #a4a4a4;
    border-left: none;
}

.browser-title {
    flex: 1;
    margin-left: -6px;
    padding-bottom: 2px;
    font-weight: normal;
}

.collapse svg,
.dialog-icon {
    width: 10px;
    height: 10px;
}

.grip {
    width: 3px;
    height: 12px;
    border: 1px solid #888;
    border-width: 0 1px;
}

.root {
    display: flex;
    align-items: center;
    width: fit-content;
    height: 20px;
    margin: 5px 0 4px 4px;
    padding: 0 7px 0 2px;
    background-color: #cbcbcb;
}

.root-name {
    display: flex;
    align-items: center;
    gap: 10px;
    height: 18px;
    padding: 0 13px 0 2px;
    border-left: 3px solid #f9cf8a;
    background-color: #808080;
    color: #fff;
    font-weight: bold;
}

.active {
    appearance: none;
    width: 13px;
    height: 13px;
    margin: 0 0 0 4px;
    border: 1px solid #222;
    border-radius: 50%;
    background: radial-gradient(#111 2px, #fff 3px);
}

.tree {
    list-style: none;
    display: flex;
    flex-direction: column;
    gap: 4px;
}

.sketches {
    padding-left: 40px;
}

.row {
    display: flex;
    align-items: center;
}

.toggle {
    width: 22px;
    padding-left: 4px;
}

.toggle svg {
    width: 10px;
    height: 14px;
}

.expanded {
    padding-left: 2px;
}

.expanded svg {
    width: 12px;
    height: 12px;
}

.node {
    display: flex;
    align-items: center;
    gap: 10px;
    height: 20px;
    padding: 0 10px 0 2px;
    background-color: #cbcbcb;
}

.sketches .node {
    padding-right: 13px;
}

.component {
    border-left: 5px solid #f9b4b4;
}

.name {
    margin-left: 4px;
    white-space: nowrap;
}

/* Create drawing dialog, floats over the canvas */
.dialog {
    position: absolute;
    top: 50px;
    right: 39px;
    width: 250px;
    border: 1px solid #a4a4a4;
    border-radius: 2px;
    background-color: #dedede;
}

.dialog-head {
    display: flex;
    align-items: center;
    gap: 11px;
    height: 24px;
    padding-left: 5px;
    border-bottom: 1px solid #a4a4a4;
    background-color: #d0d0d0;
}

.dialog-title {
    padding-bottom: 2px;
    color: #555;
    font-weight: normal;
}

.dialog-body {
    padding-bottom: 20px;
}

.section {
    display: flex;
    align-items: center;
    gap: 3px;
    height: 26px;
    padding-left: 2px;
}

.section .caret {
    border-width: 6px 5px 0;
}

.field {
    display: flex;
    align-items: center;
    height: 26px;
    padding: 0 13px 0 10px;
}

.field label {
    width: 85px;
}

.check {
    appearance: none;
    display: grid;
    place-items: center;
    width: 13px;
    height: 13px;
    margin: 0 0 0 3px;
    border: 1px solid #333;
    border-radius: 3px;
    background: linear-gradient(#bbb, #eee);
}

.check:checked::after {
    content: "";
    width: 5px;
    height: 9px;
    border: solid #000;
    border-width: 0 2px 2px 0;
    transform: rotate(40deg);
}

.select {
    position: relative;
    flex: 1;
}

.select select {
    appearance: none;
    display: block;
    width: 100%;
    height: 22px;
    padding: 0 5px;
    border: none;
    border-radius: 0;
    background-color: #c8c8c8;
    color: inherit;
    font: inherit;
}

.select::after {
    content: "";
    position: absolute;
    top: 9px;
    right: 5px;
    border: 3px solid transparent;
    border-top: 4px solid #333;
    border-bottom: none;
    pointer-events: none;
}

.dialog-foot {
    display: flex;
    align-items: center;
    gap: 6px;
    height: 36px;
    padding: 0 10px 0 13px;
    border-top: 1px solid #a4a4a4;
    background-color: #d0d0d0;
}

.info {
    width: 12px;
    height: 12px;
    margin-right: auto;
}

.action {
    width: 60px;
    height: 19px;
    border: 1px solid #b4b4b4;
    background-color: #e8e8e8;
    color: #555;
    font-size: 12px;
    line-height: 16px;
}

/* Bottom dock */
.dock {
    position: relative;
    display: flex;
    align-items: flex-end;
    gap: 460px;
    margin-top: auto;
    padding-bottom: 4px;
}

.comments {
    width: 120px;
    height: 25px;
    margin-bottom: 8px;
    border: 1px solid #a4a4a4;
    border-left: none;
    background-color: #d0d0d0;
}

.views {
    display: flex;
    gap: 8px;
}

.bar {
    display: flex;
    align-items: center;
    gap: 8px;
    height: 24px;
    padding: 0 5px 0 2px;
    background-color: #c8c8c8;
}

.view {
    display: flex;
    align-items: center;
    gap: 3px;
}

.view .caret {
    margin-right: -2px;
}

.bar + .bar .view {
    gap: 1px;
}

.view svg {
    width: 18px;
    height: 18px;
}

/* Timeline runs off the bottom of the window */
.timeline {
    display: flex;
    height: 23px;
    overflow: hidden;
    background-color: #cbcbcb;
}

.player {
    display: flex;
    gap: 11px;
    width: 108px;
    padding-top: 13px;
    fill: #444;
}

.play {
    height: 14px;
}

.play svg {
    width: 14px;
    height: 14px;
}

.history {
    display: flex;
    gap: 4px;
    padding-top: 6px;
}

.span {
    position: relative;
    display: flex;
    gap: 8px;
    height: 24px;
    padding: 4px 2px 0;
    border-top: 4px solid #f9d68c;
}

.pink {
    border-top-color: #f9b4b4;
}

.narrow {
    margin-left: -4px;
    margin-right: 4px;
}

.marker {
    position: absolute;
    top: -2px;
    right: -8px;
    width: 12px;
    height: 16px;
}
```
